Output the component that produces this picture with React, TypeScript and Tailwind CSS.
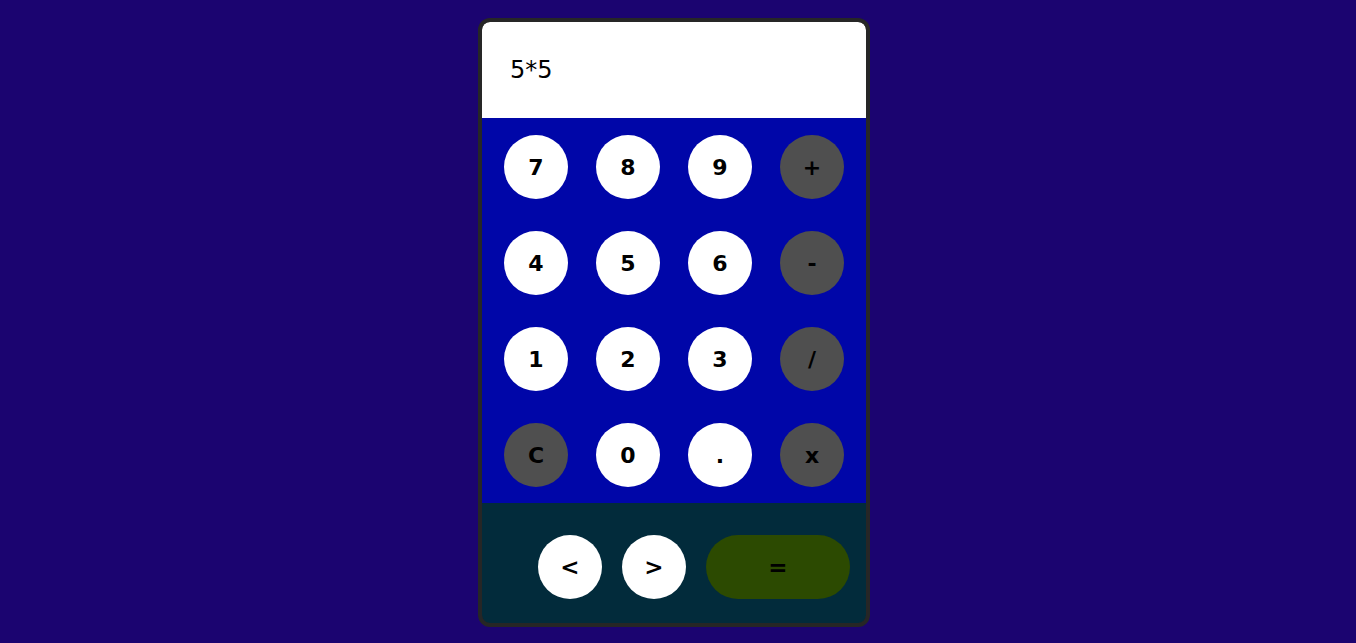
const keys: { label: string; dark?: boolean }[] = [
  { label: '7' }, { label: '8' }, { label: '9' }, { label: '+', dark: true },
  { label: '4' }, { label: '5' }, { label: '6' }, { label: '-', dark: true },
  { label: '1' }, { label: '2' }, { label: '3' }, { label: '/', dark: true },
  { label: 'C', dark: true }, { label: '0' }, { label: '.' }, { label: 'x', dark: true },
];

export default function App() {
  return (
    <div className="min-h-[643px] w-full bg-[#1b0470] flex justify-center pt-[18px] pr-2 font-['Tahoma','DejaVu_Sans',sans-serif]">
      <div className="w-[392px] h-[609px] border-4 border-[#262626] rounded-xl overflow-hidden flex flex-col bg-[#262626]">
        {/* display */}
        <div className="h-[96px] bg-white rounded-t-lg flex items-center px-7 text-[24px] text-black">
          5*5
        </div>

        {/* keypad */}
        <div className="h-[385px] bg-[#0006a8] grid grid-cols-4 gap-x-7 gap-y-8 px-[22px] pt-[17px] pb-4">
          {keys.map((k) => (
            <button
              key={k.label}
              className={`w-16 h-16 rounded-full flex items-center justify-center text-[22px] font-bold text-black ${
                k.dark ? 'bg-[#4f4f4f]' : 'bg-white'
              }`}
            >
              {k.label}
            </button>
          ))}
        </div>

        {/* bottom controls */}
        <div className="flex-1 bg-[#022b3b] rounded-b-lg flex items-center justify-end gap-5 pr-4 pt-2">
          <button className="w-16 h-16 rounded-full bg-white flex items-center justify-center text-[23px] font-bold text-black">
            &lt;
          </button>
          <button className="w-16 h-16 rounded-full bg-white flex items-center justify-center text-[23px] font-bold text-black">
            &gt;
          </button>
          <button className="w-[144px] h-16 rounded-full bg-[#2c4a01] flex items-center justify-center text-[23px] font-bold text-black">
            =
          </button>
        </div>
      </div>
    </div>
  );
}
